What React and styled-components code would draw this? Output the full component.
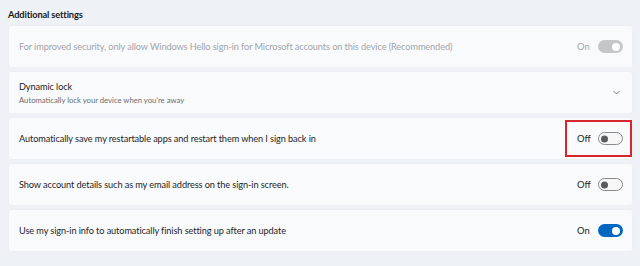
import React from 'react';
import styled, { createGlobalStyle, css } from 'styled-components';

const GlobalStyle = createGlobalStyle`
  html, body {
    margin: 0;
    padding: 0;
    background: #eef1f6;
    font-family: Lato, 'Noto Sans', sans-serif;
  }
`;

const Page = styled.div`
  width: 640px;
  height: 266px;
  box-sizing: border-box;
  padding: 8px 7px 0 8px;
  background: #eef1f6;
`;

const Heading = styled.h2`
  margin: 0 0 4px;
  font-size: 9.3px;
  font-weight: 700;
  letter-spacing: -0.15px;
  color: #1b1b1b;
  line-height: 13px;
`;

const List = styled.div`
  display: flex;
  flex-direction: column;
  gap: 3px;
`;

const Card = styled.div`
  height: 43px;
  box-sizing: border-box;
  display: flex;
  align-items: center;
  justify-content: space-between;
  padding: 0 9px 0 10px;
  background: #f9fafc;
  border: 1px solid #eceff3;
  border-radius: 3px;
`;

const TextBlock = styled.div`
  display: flex;
  flex-direction: column;
  gap: 2px;
  padding-top: 1px;
`;

const Label = styled.span`
  font-size: 9.2px;
  letter-spacing: -0.1px;
  color: ${({ disabled }) => (disabled ? '#a3a5a8' : '#1f1f1f')};
  line-height: 12px;
`;

const Sub = styled.span`
  font-size: 7.7px;
  color: #6b6d70;
  line-height: 10px;
`;

const Control = styled.div`
  display: flex;
  align-items: center;
  gap: 9px;
  ${({ highlight }) =>
    highlight &&
    css`
      outline: 2px solid #d7262d;
      outline-offset: 0;
      padding: 10px 7px 10px 10px;
      margin-right: -7px;
    `}
`;

const State = styled.span`
  font-size: 9.4px;
  color: ${({ disabled }) => (disabled ? '#a3a5a8' : '#1f1f1f')};
  width: 12px;
`;

const Track = styled.span`
  position: relative;
  width: 25px;
  height: 13px;
  box-sizing: border-box;
  border-radius: 7px;
  ${({ on, disabled }) =>
    disabled
      ? css`
          background: #c5c6c8;
        `
      : on
      ? css`
          background: #0067c0;
        `
      : css`
          background: #f7f7f8;
          border: 1px solid #8a8a8a;
        `}
`;

const Knob = styled.span`
  position: absolute;
  top: 50%;
  transform: translateY(-50%);
  border-radius: 50%;
  ${({ on }) =>
    on
      ? css`
          right: 3px;
          width: 8px;
          height: 8px;
          background: #ffffff;
        `
      : css`
          left: 2px;
          width: 7px;
          height: 7px;
          background: #5b5b5b;
        `}
`;

const Chevron = styled.svg`
  width: 9px;
  height: 9px;
  margin-right: 2px;
`;

function Toggle({ on, disabled, highlight }) {
  return (
    <Control highlight={highlight}>
      <State disabled={disabled}>{on ? 'On' : 'Off'}</State>
      <Track on={on} disabled={disabled}>
        <Knob on={on} />
      </Track>
    </Control>
  );
}

export default function App() {
  return (
    <>
      <GlobalStyle />
      <Page>
        <Heading>Additional settings</Heading>
        <List>
          <Card>
            <Label disabled>
              For improved security, only allow Windows Hello sign-in for Microsoft accounts on this device (Recommended)
            </Label>
            <Toggle on disabled />
          </Card>
          <Card>
            <TextBlock>
              <Label>Dynamic lock</Label>
              <Sub>Automatically lock your device when you’re away</Sub>
            </TextBlock>
            <Chevron viewBox="0 0 12 12" fill="none" stroke="#555" strokeWidth="1" strokeLinecap="round">
              <path d="M2.5 4.5 L6 8 L9.5 4.5" />
            </Chevron>
          </Card>
          <Card>
            <Label>Automatically save my restartable apps and restart them when I sign back in</Label>
            <Toggle highlight />
          </Card>
          <Card>
            <Label>Show account details such as my email address on the sign-in screen.</Label>
            <Toggle />
          </Card>
          <Card>
            <Label>Use my sign-in info to automatically finish setting up after an update</Label>
            <Toggle on />
          </Card>
        </List>
      </Page>
    </>
  );
}
